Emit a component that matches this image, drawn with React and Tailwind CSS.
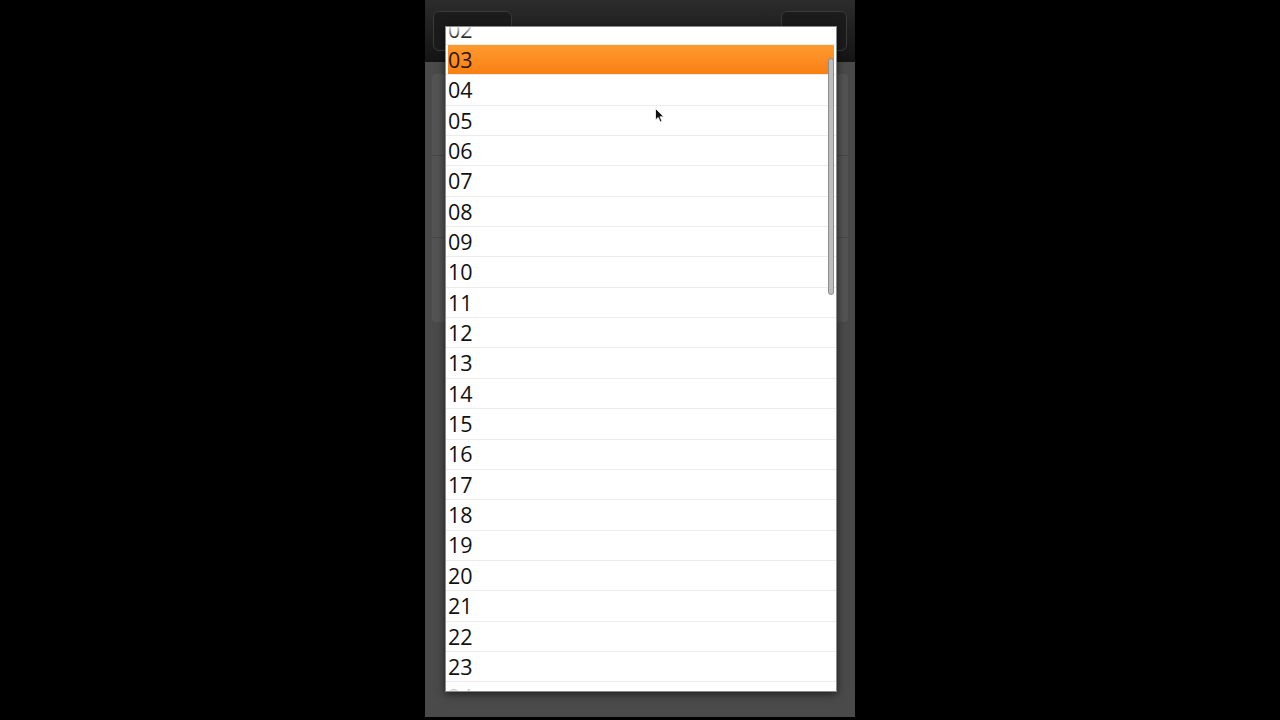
import React from 'react';

const rows = Array.from({ length: 24 }, (_, i) => String(i + 2).padStart(2, '0'));

function Row({ label, selected }) {
    return (
        <div className="h-[30.35px] border-b border-[#ececec] flex items-stretch px-[2px]">
            <div className={`flex-1 flex items-center ${selected ? 'bg-gradient-to-b from-[#ff9a2e] to-[#f98012] text-[#2b1400]' : 'text-[#111]'}`}>
                <span className="text-[21.5px] leading-none">{label}</span>
            </div>
        </div>
    );
}

export default function App() {
    return (
        <div className="w-full h-[720px] bg-black flex justify-center" style={{ fontFamily: '"Open Sans", "Noto Sans", sans-serif' }}>
            <div className="relative w-[430px] h-[717px] bg-[#4a4a4a] overflow-hidden">
                {/* thanh tiêu đề phía sau */}
                <div className="h-[62px] bg-gradient-to-b from-[#2c2c2c] to-[#141414] flex items-start justify-between px-[8px] pt-[11px]">
                    <div className="w-[79px] h-[40px] rounded-md bg-[#1b1b1b] border border-[#3a3a3a]"></div>
                    <div className="pt-[9px] text-[21px] font-bold text-[#5f5f5f]">Edit Activity</div>
                    <div className="w-[66px] h-[40px] rounded-md bg-[#1b1b1b] border border-[#3a3a3a]"></div>
                </div>
                <div className="px-[7px] pt-[12px]">
                    <div className="h-[248px] bg-[#535353] rounded-sm flex flex-col">
                        <div className="h-[82px] border-b border-[#474747]"></div>
                        <div className="h-[82px] border-b border-[#474747]"></div>
                        <div className="flex-1"></div>
                    </div>
                </div>

                {/* hộp thoại danh sách */}
                <div className="absolute left-[20px] top-[26px] w-[392px] h-[666px] bg-white border border-[#8a8a8a] shadow-[0_2px_8px_rgba(0,0,0,0.6)] overflow-hidden">
                    <div className="mt-[-12.3px]">
                        {rows.map((r) => (
                            <Row key={r} label={r} selected={r === '03'} />
                        ))}
                    </div>
                    <div className="absolute top-0 left-0 right-0 h-[12px] bg-gradient-to-b from-white/80 to-transparent"></div>
                    <div className="absolute bottom-0 left-0 right-0 h-[10px] bg-gradient-to-t from-white/90 to-transparent"></div>
                    <div className="absolute right-[2px] top-[31px] w-[6px] h-[237px] rounded-full bg-[#bdbdbd] border border-[#8c8c8c]"></div>
                </div>

                {/* con trỏ chuột */}
                <svg className="absolute left-[230px] top-[108px]" width="10" height="16" viewBox="0 0 10 16">
                    <path d="M0.5 0.5 L0.5 12 L3.2 9.4 L5.2 14 L7 13.2 L5 8.8 L8.8 8.8 Z" fill="#111" stroke="#fff" strokeWidth="0.8" />
                </svg>
            </div>
        </div>
    );
}
